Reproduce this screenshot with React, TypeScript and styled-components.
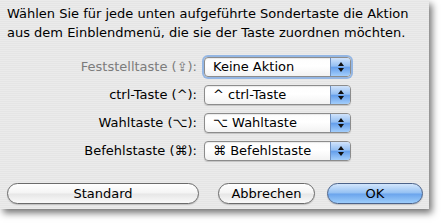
import { FC, Fragment } from 'react';
import styled, { createGlobalStyle } from 'styled-components';

const GlobalStyle = createGlobalStyle`
  body {
    margin: 0;
    background: #fff;
    font-family: "DejaVu Sans", "Liberation Sans", sans-serif;
  }
`;

type KeyRow = { label: string; value: string; dim?: boolean; focused?: boolean };

const rows: KeyRow[] = [
  { label: 'Feststelltaste (⇪):', value: 'Keine Aktion', dim: true, focused: true },
  { label: 'ctrl-Taste (^):', value: '^ ctrl-Taste' },
  { label: 'Wahltaste (⌥):', value: '⌥ Wahltaste' },
  { label: 'Befehlstaste (⌘):', value: '⌘ Befehlstaste' },
];

const Screen = styled.div`
  width: 441px;
  height: 223px;
  overflow: hidden;
  background: #fff;
`;

const Dialog = styled.div`
  width: 429px;
  height: 209px;
  box-sizing: border-box;
  padding: 4px 6px 0 7px;
  background: repeating-linear-gradient(
    to bottom,
    #ebebeb 0px,
    #ebebeb 1px,
    #e5e5e5 1px,
    #e5e5e5 2px
  );
  box-shadow: 3px 4px 7px rgba(0, 0, 0, 0.55);
  color: #000;
`;

const Message = styled.p`
  margin: 0;
  font-size: 13px;
  line-height: 19px;
  white-space: nowrap;
`;

const Form = styled.div`
  display: grid;
  grid-template-columns: 190px 147px;
  column-gap: 7px;
  row-gap: 8px;
  margin-top: 15px;
`;

const Label = styled.div<{ $dim?: boolean }>`
  height: 20px;
  line-height: 20px;
  text-align: right;
  font-size: 13px;
  color: ${(p) => (p.$dim ? '#7c7c7c' : '#000')};
  white-space: nowrap;
`;

const Popup = styled.div<{ $focused?: boolean }>`
  display: flex;
  height: 20px;
  box-sizing: border-box;
  border: 1px solid #8c8c8c;
  border-radius: 4px;
  background: linear-gradient(to bottom, #fdfdfd, #ffffff 45%, #f2f2f2);
  box-shadow: ${(p) =>
    p.$focused
      ? '0 0 0 2px rgba(120, 165, 225, 0.75), inset 0 1px 1px rgba(0,0,0,0.08)'
      : '0 1px 1px rgba(0,0,0,0.15), inset 0 1px 1px rgba(0,0,0,0.08)'};
  overflow: hidden;
`;

const PopupText = styled.span`
  flex: 1;
  padding-left: 8px;
  font-size: 13px;
  line-height: 18px;
  white-space: nowrap;
`;

const Stepper = styled.span`
  width: 19px;
  display: flex;
  flex-direction: column;
  align-items: center;
  justify-content: center;
  gap: 2px;
  border-left: 1px solid #6d8fc0;
  background: linear-gradient(
    to bottom,
    #d0e3fb 0%,
    #94bff3 45%,
    #659fec 52%,
    #a3cefb 100%
  );
`;

const Arrow = styled.span<{ $down?: boolean }>`
  width: 0;
  height: 0;
  border-left: 3px solid transparent;
  border-right: 3px solid transparent;
  ${(p) => (p.$down ? 'border-top: 4px solid #111;' : 'border-bottom: 4px solid #111;')}
`;

const ButtonBar = styled.div`
  display: flex;
  margin-top: 22px;
`;

const Button = styled.div<{ $width: number; $gap?: number; $primary?: boolean }>`
  width: ${(p) => p.$width}px;
  margin-left: ${(p) => p.$gap ?? 0}px;
  height: 21px;
  box-sizing: border-box;
  border: 1px solid ${(p) => (p.$primary ? '#4b6289' : '#6b6b6b')};
  border-radius: 11px;
  text-align: center;
  font-size: 13px;
  line-height: 19px;
  background: ${(p) =>
    p.$primary
      ? 'linear-gradient(to bottom, #d3e6fc 0%, #93c0f3 48%, #6aa4ec 52%, #9ccdfb 100%)'
      : 'linear-gradient(to bottom, #ffffff 0%, #f4f4f4 48%, #e6e6e6 52%, #fafafa 100%)'};
  box-shadow: 0 1px 1px rgba(0, 0, 0, 0.18);
`;

const App: FC = () => (
  <>
    <GlobalStyle />
    <Screen>
      <Dialog>
        <Message>
          Wählen Sie für jede unten aufgeführte Sondertaste die Aktion
          <br />
          aus dem Einblendmenü, die sie der Taste zuordnen möchten.
        </Message>
        <Form>
          {rows.map((r) => (
            <Fragment key={r.label}>
              <Label $dim={r.dim}>{r.label}</Label>
              <Popup $focused={r.focused}>
                <PopupText>{r.value}</PopupText>
                <Stepper>
                  <Arrow />
                  <Arrow $down />
                </Stepper>
              </Popup>
            </Fragment>
          ))}
        </Form>
        <ButtonBar>
          <Button $width={192}>Standard</Button>
          <Button $width={97} $gap={19}>
            Abbrechen
          </Button>
          <Button $width={96} $gap={12} $primary>
            OK
          </Button>
        </ButtonBar>
      </Dialog>
    </Screen>
  </>
);

export default App;
